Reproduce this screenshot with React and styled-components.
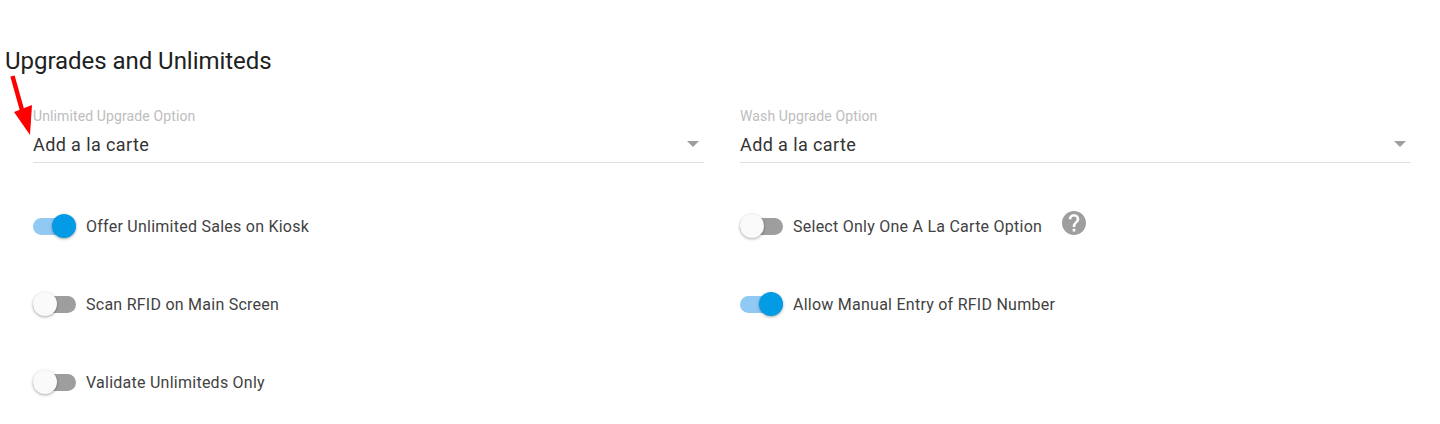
import React from 'react';
import styled, { createGlobalStyle } from 'styled-components';

const GlobalStyle = createGlobalStyle`
  html, body {
    margin: 0;
    background: #fff;
    font-family: Roboto, "Liberation Sans", sans-serif;
  }
`;

const App = () => {
  return (
    <Page>
      <GlobalStyle />
      <Title>Upgrades and Unlimiteds</Title>
      <Arrow viewBox="0 0 24 64" aria-hidden="true">
        <line x1="3.5" y1="1" x2="13" y2="35" stroke="#fe0000" strokeWidth="4.5" />
        <polygon points="5,37 23,30 21,60" fill="#fe0000" />
      </Arrow>
      <Form>
        <SelectField label="Unlimited Upgrade Option" value="Add a la carte" />
        <SelectField label="Wash Upgrade Option" value="Add a la carte" />
        <Toggle on label="Offer Unlimited Sales on Kiosk" />
        <Toggle label="Select Only One A La Carte Option" help />
        <Toggle label="Scan RFID on Main Screen" />
        <Toggle on label="Allow Manual Entry of RFID Number" />
        <Toggle label="Validate Unlimiteds Only" />
      </Form>
    </Page>
  );
};

const SelectField = ({ label, value }) => (
  <Field>
    <FieldLabel>{label}</FieldLabel>
    <FieldValue>
      {value}
      <Caret />
    </FieldValue>
  </Field>
);

const Toggle = ({ on, label, help }) => (
  <ToggleRow>
    <Switch>
      <Track $on={on} />
      <Thumb $on={on} />
    </Switch>
    <ToggleLabel>{label}</ToggleLabel>
    {help && (
      <HelpIcon viewBox="0 0 24 24" aria-hidden="true">
        <path d="M12 0C5.37 0 0 5.37 0 12s5.37 12 12 12 12-5.37 12-12S18.63 0 12 0zm1.3 20.4h-2.6v-2.6h2.6v2.6zm2.7-9.3l-1.2 1.2c-1 1-1.5 1.8-1.5 3.7h-2.6v-.65c0-1.43.58-2.73 1.52-3.68l1.6-1.63c.48-.47.78-1.12.78-1.84a2.6 2.6 0 0 0-5.2 0H6.7a5.3 5.3 0 0 1 10.6 0c0 1.14-.47 2.18-1.3 2.9z" fill="#9e9e9e" />
      </HelpIcon>
    )}
  </ToggleRow>
);

const Page = styled.div`
  position: relative;
  height: 424px;
  padding-top: 47px;
  box-sizing: border-box;
  overflow: hidden;
`;

const Title = styled.h2`
  margin: 0 0 0 5px;
  font-size: 24px;
  font-weight: 400;
  line-height: 28px;
  letter-spacing: -0.04px;
  color: #212121;
`;

const Arrow = styled.svg`
  position: absolute;
  left: 9px;
  top: 75px;
  width: 24px;
  height: 64px;
`;

const Form = styled.div`
  display: grid;
  grid-template-columns: 671px 671px;
  column-gap: 36px;
  margin: 33px 0 0 33px;
`;

const Field = styled.div`
  height: 79px;
`;

const FieldLabel = styled.div`
  font-size: 14px;
  line-height: 16px;
  letter-spacing: 0.12px;
  color: #bdbdbd;
`;

const FieldValue = styled.div`
  position: relative;
  height: 39px;
  line-height: 27px;
  padding-top: 7px;
  box-sizing: border-box;
  font-size: 18px;
  color: #333;
  letter-spacing: 0.4px;
  border-bottom: 1px solid #e0e0e0;
`;

const Caret = styled.span`
  position: absolute;
  right: 5px;
  top: 17px;
  width: 0;
  height: 0;
  border-left: 6px solid transparent;
  border-right: 6px solid transparent;
  border-top: 6px solid #9e9e9e;
`;

const ToggleRow = styled.div`
  display: flex;
  align-items: center;
  height: 78px;
`;

const Switch = styled.div`
  position: relative;
  width: 43px;
  height: 24px;
  flex-shrink: 0;
`;

const Track = styled.div`
  position: absolute;
  left: 0;
  top: 4px;
  right: 0;
  height: 17px;
  border-radius: 9px;
  background: ${props => (props.$on ? '#90caf4' : '#9e9e9e')};
`;

const Thumb = styled.div`
  position: absolute;
  top: 0;
  left: ${props => (props.$on ? '19px' : '0')};
  width: 24px;
  height: 24px;
  border-radius: 50%;
  background: ${props => (props.$on ? '#039be5' : '#fafafa')};
  box-shadow: 0 1px 3px rgba(0, 0, 0, 0.35);
`;

const ToggleLabel = styled.span`
  margin-left: 10px;
  font-size: 16px;
  letter-spacing: 0.25px;
  color: #424242;
`;

const HelpIcon = styled.svg`
  width: 24px;
  height: 24px;
  margin: -6px 0 0 20px;
`;

export default App;
